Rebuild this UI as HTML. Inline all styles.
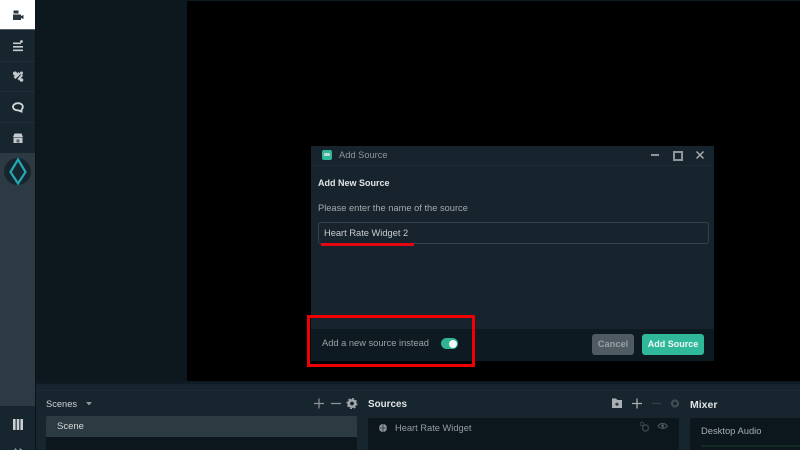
<!DOCTYPE html>
<html><head><meta charset="utf-8">
<style>
html,body{margin:0;padding:0;background:#000;}
#p{position:relative;width:800px;height:450px;overflow:hidden;background:#000;font-family:"Liberation Sans",sans-serif;filter:blur(.35px);}
#p div,#p svg,#p span{position:absolute;}
.t{white-space:nowrap;line-height:1;}
</style></head><body>
<div id="p">
<!-- sidebar -->
<div style="left:0;top:0;width:35px;height:450px;background:#17252e"></div>
<div style="left:35px;top:0;width:1px;height:450px;background:#0a1318"></div>
<div style="left:0;top:0;width:35px;height:29px;background:#fff"></div>
<div style="left:0;top:29px;width:35px;height:1px;background:#55626a"></div>
<div style="left:0;top:61px;width:35px;height:1px;background:#1f2d36"></div>
<div style="left:0;top:91px;width:35px;height:1px;background:#1f2d36"></div>
<div style="left:0;top:122px;width:35px;height:1px;background:#1f2d36"></div>
<div style="left:0;top:153px;width:35px;height:253px;background:#2b3a43"></div>
<div style="left:4px;top:158px;width:27px;height:27px;border-radius:50%;background:#17252e"></div>
<svg style="left:0;top:150px" width="36" height="45"><path d="M18 9.500 L25.500 22 L18 33.500 L10.500 22 Z" fill="none" stroke="#22a9b5" stroke-width="2.200"/></svg>
<svg style="left:0;top:0" width="36" height="160">
<path d="M13.500 10.500h5v3h-5zM13 14.500h8v5.500h-8zM21 16l2.500-1v4L21 18z" fill="#2a3740"/>
<path d="M13 42.500h8v1.600h-8zM13 46h10v1.600h-10zM13 49.500h10v1.600h-10z" fill="#c4cacd"/><circle cx="21.500" cy="41.500" r="1.400" fill="#c4cacd"/>
<path d="M13.500 77l5-5 2 2-5 5zM17.500 79l4-5 1.500 1.500-4 5z" fill="#c4cacd"/><circle cx="15" cy="73.500" r="2" fill="#c4cacd"/><circle cx="21.500" cy="80" r="1.800" fill="#c4cacd"/><circle cx="21.500" cy="73" r="1.500" fill="#c4cacd"/>
<path d="M18 103.200c-2.800 0-5 1.500-5 3.600s2.200 3.500 5 3.500l3.500 1.300v-2c.9-.7 1.300-1.700 1.300-2.800 0-2.100-2-3.600-4.800-3.600z" fill="none" stroke="#d2d7d9" stroke-width="1.800"/>
<path d="M14.500 133.500h7l1.500 3.500h-10zM13.500 137.500h9v5.500h-9z" fill="#c4cacd"/><rect x="16.500" y="139.500" width="3" height="3" fill="#55626a"/>
</svg>
<svg style="left:0;top:405px" width="36" height="45">
<path d="M13 14h2.600v11H13zM16.700 14h2.600v11h-2.600zM20.400 14h2.600v11h-2.600z" fill="#c9ced1"/>
<path d="M14 45l1.500-2 1.500 2zM19 45l1.500-2 1.500 2z" fill="#8b9499"/>
</svg>
<!-- left column -->
<div style="left:36px;top:0;width:151px;height:381px;background:#0d181e"></div>
<div style="left:187px;top:0;width:613px;height:1px;background:#0d1a20"></div>
<!-- bottom band -->
<div style="left:36px;top:381px;width:764px;height:3px;background:#0f1b22"></div>
<div style="left:36px;top:384px;width:764px;height:66px;background:#17252e"></div>
<div style="left:36px;top:390px;width:764px;height:1px;background:#1d2b34"></div>
<!-- dialog -->
<div style="left:311px;top:146px;width:403px;height:215px;background:#17242d"></div>
<div style="left:311px;top:165px;width:403px;height:1px;background:#1e2c35"></div>
<div style="left:311px;top:329px;width:403px;height:32px;background:#0d1a21"></div>
<div style="left:322px;top:150px;width:10px;height:10px;border-radius:2px;background:#2fb89a"></div>
<div style="left:324px;top:153px;width:6px;height:3px;border-radius:1px;background:#c5d6d3"></div>
<div class="t" style="left:339px;top:151px;font-size:9.300px;color:#8c9499">Add Source</div>
<div style="left:651px;top:154px;width:8px;height:1.500px;background:#8e969b"></div>
<div style="left:673px;top:151px;width:6px;height:6px;border:2px solid #8e969b"></div>
<svg style="left:695px;top:150px" width="10" height="10"><path d="M1.500 1.500L8.500 8.500M8.500 1.500L1.500 8.500" stroke="#a5abae" stroke-width="1.500"/></svg>
<div class="t" style="left:318px;top:179px;font-size:9px;font-weight:bold;color:#e3e6e8">Add New Source</div>
<div class="t" style="left:318px;top:203.500px;font-size:9.300px;color:#a3a9ad">Please enter the name of the source</div>
<div style="left:318px;top:222px;width:389px;height:20px;border:1px solid #33424b;border-radius:3px"></div>
<div class="t" style="left:324px;top:229px;font-size:9.300px;color:#c9cdd0">Heart Rate Widget 2</div>
<div style="left:321px;top:243px;width:93px;height:2.700px;background:#e30613"></div>
<div class="t" style="left:322px;top:339px;font-size:9.300px;color:#9ca3a7">Add a new source instead</div>
<div style="left:441px;top:338px;width:17px;height:11px;border-radius:5.500px;background:#2fb595"></div>
<div style="left:449px;top:339.500px;width:8px;height:8px;border-radius:50%;background:#f4f7f6"></div>
<div style="left:592px;top:334px;width:42px;height:21px;border-radius:3px;background:#4e5b62"></div>
<div class="t" style="left:592px;top:340px;width:42px;text-align:center;font-size:9.300px;font-weight:bold;color:#98a0a4">Cancel</div>
<div style="left:642px;top:334px;width:62px;height:21px;border-radius:3px;background:#2fb89a"></div>
<div class="t" style="left:642px;top:340px;width:62px;text-align:center;font-size:9px;font-weight:bold;color:#f0f8f6">Add Source</div>
<!-- red box -->
<div style="left:307px;top:315px;width:162px;height:46px;border:3px solid #f00000"></div>
<!-- scenes -->
<div class="t" style="left:46px;top:400px;font-size:9.300px;color:#d0d4d6">Scenes</div>
<svg style="left:84px;top:400px" width="10" height="8"><path d="M2 2h6L5 5.500z" fill="#8f979b"/></svg>
<svg style="left:312px;top:396px" width="50" height="15">
<path d="M7 2.500v10M2 7.500h10M19 7.500h10" stroke="#8d959a" stroke-width="1.200" fill="none"/>
<circle cx="40" cy="7.500" r="3.200" fill="none" stroke="#a2a9ac" stroke-width="2.600"/><circle cx="40" cy="7.500" r="5" fill="none" stroke="#a2a9ac" stroke-width="1" stroke-dasharray="2 1.900"/>
</svg>
<div style="left:46px;top:437px;width:311px;height:13px;background:#0c171d"></div>
<div style="left:46px;top:416px;width:311px;height:21px;border-radius:2px 2px 0 0;background:#2c3a42"></div>
<div class="t" style="left:57px;top:422px;font-size:9.500px;color:#d4d8da">Scene</div>
<!-- sources -->
<div class="t" style="left:368px;top:400px;font-size:9.900px;font-weight:bold;color:#dfe3e5">Sources</div>
<svg style="left:610px;top:396px" width="72" height="15">
<path d="M2 2.500h4l1.500 1.500H12v8H2z" fill="#a9afb2"/><path d="M7 6.500v3.500M5.200 8.200h3.600" stroke="#17252e" stroke-width="1.100"/>
<path d="M27 2.500v10M22 7.500h10" stroke="#a9afb2" stroke-width="1.300" fill="none"/>
<path d="M42 7.500h9" stroke="#34424b" stroke-width="1.200" fill="none"/>
<circle cx="65" cy="7.500" r="3" fill="none" stroke="#3f4d55" stroke-width="2.200"/>
</svg>
<div style="left:368px;top:418px;width:311px;height:32px;border-radius:2px 2px 0 0;background:#0c171d"></div>
<svg style="left:377px;top:422px" width="12" height="12"><circle cx="6" cy="6" r="4" fill="#8d959a"/><path d="M2 6h8M6 2v8" stroke="#0c171d" stroke-width=".6"/></svg>
<div class="t" style="left:395px;top:423.500px;font-size:9.300px;color:#959da1">Heart Rate Widget</div>
<svg style="left:638px;top:420px" width="32" height="14">
<circle cx="4" cy="4" r="1.800" fill="none" stroke="#33424a" stroke-width="1.100"/><rect x="4.500" y="5" width="6" height="6" rx="3" fill="none" stroke="#34434b" stroke-width="1.400"/>
<path d="M20 6c2-3.200 7-3.200 9.500 0-2.500 3.200-7.500 3.200-9.500 0z" fill="none" stroke="#47555d" stroke-width="1.100"/><circle cx="24.700" cy="6" r="1.600" fill="#47555d"/>
</svg>
<!-- mixer -->
<div class="t" style="left:690px;top:400px;font-size:10.500px;font-weight:bold;color:#dfe3e5">Mixer</div>
<div style="left:690px;top:418px;width:110px;height:32px;border-radius:2px 0 0 0;background:#0c171d"></div>
<div class="t" style="left:701px;top:426px;font-size:9.400px;color:#a5acb0">Desktop Audio</div>
<div style="left:701px;top:444.500px;width:99px;height:2px;background:#0e2c25"></div>
</div>
</body></html>
